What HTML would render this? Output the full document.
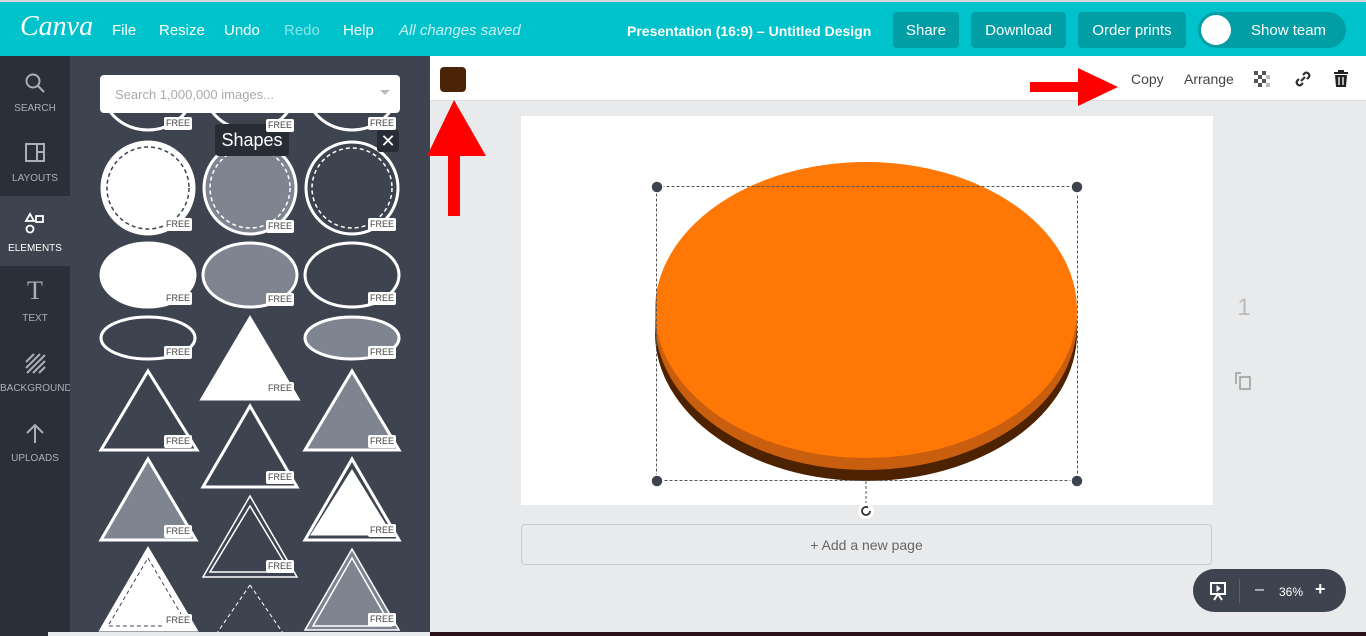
<!DOCTYPE html>
<html><head><meta charset="utf-8"><style>
*{margin:0;padding:0;box-sizing:border-box}
body{width:1366px;height:636px;overflow:hidden;font-family:"Liberation Sans","DejaVu Sans",sans-serif;background:#e9eaec;position:relative}
.top{position:absolute;left:0;top:0;width:1366px;height:56px;background:#00c2cb;border-top:2px solid #d8d8d8}
.top span{position:absolute;color:#fff;font-size:15px;top:20px}
.btn{position:absolute;top:10px;height:36px;background:#029ea6;color:#fff;font-size:15px;border-radius:4px;display:flex;align-items:center;justify-content:center}
.side{position:absolute;left:0;top:56px;width:70px;height:580px;background:#293039}
.si{position:absolute;left:0;width:70px;height:70px;color:#aab0b8;font-size:10px;text-align:center}
.si div{position:absolute;bottom:12px;width:70px;text-align:center}
.panel{position:absolute;left:70px;top:56px;width:360px;height:580px;background:#3e4350;overflow:hidden}
.tb{position:absolute;left:430px;top:56px;width:936px;height:45px;background:#fff;border-bottom:1px solid #ddd}
.fr{position:absolute;width:28px;height:13px;background:#fff;border-radius:2px;font-size:9px;color:#444;text-align:center;line-height:13px}
</style></head><body>
<div class="top">
<span style="left:20px;top:9px;font-family:'Liberation Serif',serif;font-style:italic;font-size:28px">Canva</span>
<span style="left:112px">File</span><span style="left:159px">Resize</span><span style="left:224px">Undo</span>
<span style="left:284px;color:#8ee3e7">Redo</span><span style="left:343px">Help</span>
<span style="left:399px;font-style:italic;color:#c8f1f3">All changes saved</span>
<span style="left:627px;font-weight:bold;font-size:14px;top:21px">Presentation (16:9) – Untitled Design</span>
<div class="btn" style="left:893px;width:66px">Share</div>
<div class="btn" style="left:971px;width:95px">Download</div>
<div class="btn" style="left:1078px;width:108px">Order prints</div>
<div class="btn" style="left:1198px;width:148px;border-radius:18px;justify-content:flex-start"><div style="width:30px;height:30px;border-radius:50%;background:#fff;margin:0 20px 0 3px"></div>Show team</div>
</div>
<div class="side">
<div class="si" style="top:0"><svg width="22" height="22" style="margin-top:16px" fill="none" stroke="#aab0b8" stroke-width="2"><circle cx="9" cy="9" r="6.5"/><path d="M14 14l6 6"/></svg><div>SEARCH</div></div>
<div class="si" style="top:70px"><svg width="22" height="22" style="margin-top:16px" fill="none" stroke="#aab0b8" stroke-width="2"><rect x="2" y="2" width="18" height="17"/><path d="M13 2v17M13 10h7"/></svg><div>LAYOUTS</div></div>
<div class="si" style="top:140px;background:#3e4350;color:#fff"><svg width="24" height="24" style="margin-top:15px" fill="none" stroke="#fff" stroke-width="1.8"><path d="M3 10L7 3l4 7z"/><rect x="13" y="5" width="7" height="6"/><circle cx="7" cy="18" r="3.5"/></svg><div>ELEMENTS</div></div>
<div class="si" style="top:210px"><div style="bottom:30px;font-size:26px;font-family:'Liberation Serif',serif">T</div><div>TEXT</div></div>
<div class="si" style="top:280px"><svg width="22" height="22" style="margin-top:16px" stroke="#aab0b8" stroke-width="2"><path d="M2 10L10 2M2 16L16 2M3 21L21 3M9 21L21 9M15 21l6-6"/></svg><div>BACKGROUND</div></div>
<div class="si" style="top:350px"><svg width="22" height="22" style="margin-top:16px" fill="none" stroke="#aab0b8" stroke-width="2"><path d="M11 21V3M3 11l8-8 8 8"/></svg><div>UPLOADS</div></div>
</div>
<div class="panel">
<svg width="360" height="580" style="position:absolute;left:0;top:0">
<g transform="translate(-70,-56)" stroke="#fff" stroke-width="3" fill="none">
<ellipse cx="148" cy="90" rx="45" ry="40"/><ellipse cx="250" cy="90" rx="45" ry="40"/><ellipse cx="352" cy="90" rx="45" ry="40"/>
<rect x="70" y="56" width="360" height="30" fill="#3e4350" stroke="none"/>
<circle cx="148" cy="188" r="46" fill="#fff"/><circle cx="148" cy="188" r="41" stroke="#3e4350" stroke-width="1.5" stroke-dasharray="4 3"/>
<circle cx="250" cy="188" r="46" fill="#7e8590"/><circle cx="250" cy="188" r="40" stroke-width="1.5" stroke-dasharray="4 3"/>
<circle cx="352" cy="188" r="46"/><circle cx="352" cy="188" r="40" stroke-width="1.5" stroke-dasharray="4 3"/>
<ellipse cx="148" cy="275" rx="47" ry="32" fill="#fff"/><ellipse cx="250" cy="275" rx="47" ry="32" fill="#7e8590"/><ellipse cx="352" cy="275" rx="47" ry="32"/>
<ellipse cx="148" cy="338" rx="47" ry="21"/><ellipse cx="352" cy="338" rx="47" ry="21" fill="#7e8590"/>
<path d="M250 318L298 399H202Z" fill="#fff"/>
<path d="M148 371L197 450H101Z"/><path d="M352 371L399 450H305Z" fill="#7e8590"/>
<path d="M250 406L297 487H203Z"/>
<path d="M148 459L196 540H101Z" fill="#7e8590"/><path d="M352 459L399 540H305Z"/><path d="M352 470L392 535H311Z" fill="#fff" stroke-width="1"/>
<path d="M250 496L297 577H203Z" stroke-width="1.5"/><path d="M250 506L290 572H210Z" stroke-width="1.5"/>
<path d="M148 549L196 630H101Z" fill="#fff"/><path d="M148 558L188 626H108Z" stroke="#3e4350" stroke-width="1" stroke-dasharray="4 3"/>
<path d="M250 585L285 636M250 585L215 636" stroke-width="1" stroke-dasharray="4 3"/>
<path d="M352 549L399 630H305Z" fill="#7e8590" stroke-width="1.5"/><path d="M352 558L391 626H313Z" stroke-width="1.5"/>
</g>
</svg>
<div style="position:absolute;left:30px;top:19px;width:300px;height:38px;background:#fff;border-radius:4px;color:#aaa;font-size:13px;padding:12px 15px">Search 1,000,000 images...<span style="position:absolute;right:10px;top:15px;border:5px solid transparent;border-top-color:#bbb"></span></div>
<div style="position:absolute;left:145px;top:68px;width:74px;height:32px;background:#272c35;border-radius:4px;color:#fff;font-size:18px;text-align:center;line-height:32px">Shapes</div>
<div style="position:absolute;left:307px;top:74px;width:22px;height:22px;background:#272c35;border-radius:3px;color:#fff;font-size:18px;font-weight:bold;text-align:center;line-height:22px">✕</div>
</div>
<div class="tb">
<div style="position:absolute;left:10px;top:11px;width:26px;height:25px;background:#4b2408;border-radius:4px"></div>
<span style="position:absolute;left:701px;top:15px;font-size:14px;color:#444">Copy</span>
<span style="position:absolute;left:754px;top:15px;font-size:14px;color:#444">Arrange</span>
<svg style="position:absolute;left:824px;top:15px" width="16" height="16"><g fill="#555"><rect x="0" y="0" width="4" height="4"/><rect x="8" y="0" width="4" height="4"/><rect x="4" y="4" width="4" height="4"/><rect x="12" y="4" width="4" height="4" fill="#bbb"/><rect x="0" y="8" width="4" height="4"/><rect x="8" y="8" width="4" height="4"/><rect x="4" y="12" width="4" height="4"/><rect x="12" y="12" width="4" height="4" fill="#bbb"/></g></svg>
<svg style="position:absolute;left:863px;top:13px" width="20" height="20" fill="none" stroke="#333" stroke-width="2.2"><path d="M8 12l4-4M6 10l-2 2a3 3 0 004 4l2-2M14 10l2-2a3 3 0 00-4-4l-2 2"/></svg>
<svg style="position:absolute;left:903px;top:13px" width="16" height="20" fill="#222"><rect x="1" y="3" width="14" height="2"/><rect x="5" y="1" width="6" height="2"/><path d="M2 6h12l-1 12H3z"/><path d="M6 8v8M10 8v8" stroke="#fff" stroke-width="1.3"/></svg>
</div>
<div style="position:absolute;left:521px;top:116px;width:692px;height:389px;background:#fff"></div>
<svg style="position:absolute;left:0;top:0" width="1366" height="636">
<ellipse cx="866" cy="333" rx="211" ry="148" fill="#4d2200"/>
<ellipse cx="866" cy="322" rx="211" ry="148" fill="#c95e0e"/>
<ellipse cx="866" cy="310" rx="211" ry="148" fill="#ff7704"/>
<rect x="656.5" y="186.5" width="421" height="294" fill="none" stroke="#555" stroke-dasharray="3 2"/>
<line x1="866" y1="481" x2="866" y2="505" stroke="#555" stroke-dasharray="3 2"/>
<g fill="#3e4350" stroke="#fff" stroke-width="1.5"><circle cx="657" cy="187" r="6"/><circle cx="1077" cy="187" r="6"/><circle cx="657" cy="481" r="6"/><circle cx="1077" cy="481" r="6"/></g>
<circle cx="866" cy="511" r="8" fill="#fff"/><path d="M870 511a4 4 0 1 1-2-3.5" fill="none" stroke="#333" stroke-width="1.8"/>
<path d="M448 216h12v-60h26l-32-56-27 56h21z" fill="#ff0000"/>
<path d="M1030 82h48v-14l40 19-40 19v-14h-48z" fill="#ff0000"/>
</svg>
<div style="position:absolute;left:521px;top:524px;width:691px;height:41px;border:1px solid #ccc;border-radius:4px;text-align:center;line-height:40px;color:#666;font-size:14px">+ Add a new page</div>
<div style="position:absolute;left:1232px;color:#bbb;font-size:24px;width:24px;text-align:center;top:294px">1</div>
<svg style="position:absolute;left:1233px;top:370px" width="22" height="22" fill="none" stroke="#999" stroke-width="1.5"><path d="M8 3H3v11"/><rect x="7" y="7" width="10" height="12"/></svg>
<div style="position:absolute;left:1193px;top:569px;width:153px;height:43px;background:#3e4350;border-radius:22px;color:#fff;font-size:12px">
<svg style="position:absolute;left:16px;top:12px" width="18" height="20" fill="none" stroke="#fff" stroke-width="2"><rect x="2" y="2" width="14" height="11"/><path d="M5 19l4-6 4 6"/><path d="M8 5v5l3-2.5z" fill="#fff" stroke-width="1"/></svg>
<div style="position:absolute;left:46px;top:10px;width:1px;height:24px;background:#5a606c"></div>
<span style="position:absolute;left:62px;top:12px;font-size:16px">–</span><span style="position:absolute;left:86px;top:16px">36%</span><span style="position:absolute;left:122px;top:10px;font-size:18px;font-weight:bold">+</span></div>
<div style="position:absolute;left:430px;top:632px;width:936px;height:4px;background:#2a1018"></div>
<div style="position:absolute;left:48px;top:632px;width:382px;height:4px;background:#e9eaec"></div>
<div class="fr" style="left:164px;top:117px">FREE</div><div class="fr" style="left:266px;top:119px">FREE</div><div class="fr" style="left:368px;top:117px">FREE</div>
<div class="fr" style="left:164px;top:218px">FREE</div><div class="fr" style="left:266px;top:220px">FREE</div><div class="fr" style="left:368px;top:218px">FREE</div>
<div class="fr" style="left:164px;top:292px">FREE</div><div class="fr" style="left:266px;top:293px">FREE</div><div class="fr" style="left:368px;top:292px">FREE</div>
<div class="fr" style="left:164px;top:346px">FREE</div><div class="fr" style="left:266px;top:382px">FREE</div><div class="fr" style="left:368px;top:346px">FREE</div>
<div class="fr" style="left:164px;top:435px">FREE</div><div class="fr" style="left:266px;top:471px">FREE</div><div class="fr" style="left:368px;top:435px">FREE</div>
<div class="fr" style="left:164px;top:525px">FREE</div><div class="fr" style="left:266px;top:560px">FREE</div><div class="fr" style="left:368px;top:524px">FREE</div>
<div class="fr" style="left:164px;top:614px">FREE</div><div class="fr" style="left:368px;top:613px">FREE</div>
</body></html>
